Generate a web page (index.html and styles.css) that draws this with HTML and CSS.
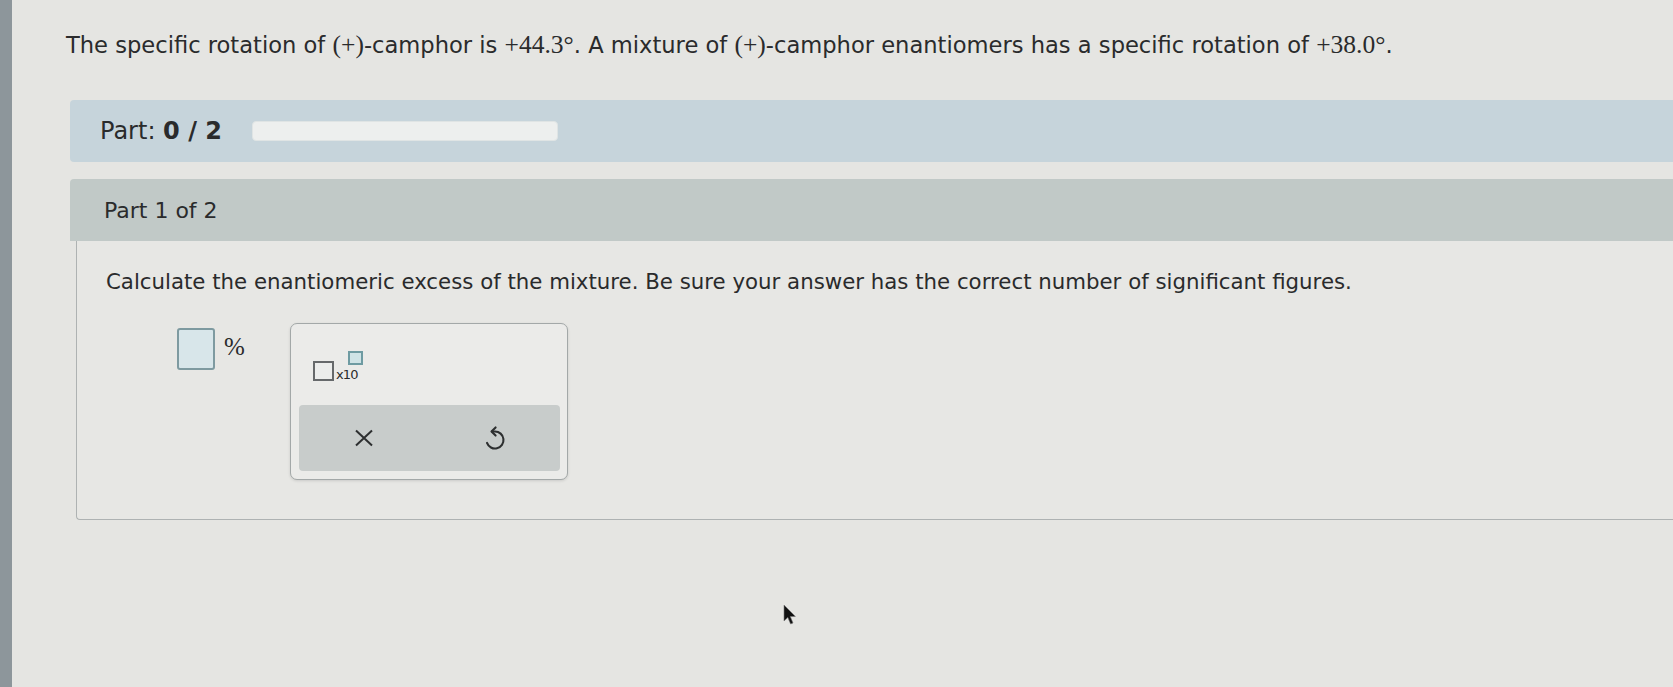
FILE: index.html
```html
<!DOCTYPE html>
<html>
<head>
<meta charset="utf-8">
<link rel="stylesheet" href="styles.css">
</head>
<body>
<div class="strip"></div>
<main class="main">
  <p class="title">The specific rotation of <span class="m">(+)</span>-camphor is <span class="m">+44.3°</span>. A mixture of <span class="m">(+)</span>-camphor enantiomers has a specific rotation of <span class="m">+38.0°</span>.</p>

  <div class="partbar">
    <span class="part-label">Part: <b>0 / 2</b></span>
    <div class="progress"></div>
  </div>

  <div class="part-header">Part 1 of 2</div>

  <section class="content">
    <p class="question">Calculate the enantiomeric excess of the mixture. Be sure your answer has the correct number of significant figures.</p>
    <div class="answer-row">
      <div class="answer">
        <span class="ans-box"></span>
        <span class="pct">%</span>
      </div>
      <div class="popup">
        <div class="sci">
          <span class="sci-box"></span>
          <span class="sci-x">x10</span>
          <span class="sci-exp"></span>
        </div>
        <div class="btnbar">
          <button class="btn" aria-label="clear">
            <svg width="22" height="22" viewBox="0 0 22 22"><path d="M3 3.5 L19 18.5 M19 3.5 L3 18.5" stroke="#2d2f30" stroke-width="2" fill="none"/></svg>
          </button>
          <button class="btn" aria-label="undo">
            <svg width="24" height="26" viewBox="0 0 24 26"><path d="M9 6.5 H12 A8.5 8.5 0 1 1 4 17.9" stroke="#2d2f30" stroke-width="2.1" fill="none" stroke-linecap="round"/><path d="M12.6 2.4 L8.5 6.5 L12.6 10.6" stroke="#2d2f30" stroke-width="2.1" fill="none" stroke-linecap="round" stroke-linejoin="round"/></svg>
          </button>
        </div>
      </div>
    </div>
  </section>
</main>
<svg class="cursor" width="14" height="22" viewBox="0 0 14 22"><path d="M1 1 L1 17 L4.8 13.4 L7.6 20 L10 19 L7.3 12.6 L12.4 12.4 Z" fill="#111" stroke="#777" stroke-width="0.6"/></svg>
</body>
</html>
```

FILE: styles.css
```css
html, body {
  margin: 0;
  height: 100%;
}
body {
  display: flex;
  background: #e5e5e2;
  font-family: "DejaVu Sans", Verdana, sans-serif;
  color: #2a2b2c;
  overflow: hidden;
}
.strip {
  width: 12px;
  flex: none;
  background: #8d969b;
}
.main {
  flex: 1;
  padding-left: 54px;
  padding-top: 0;
}
.title {
  margin: 0;
  padding-top: 30px;
  font-size: 22.6px;
  line-height: 30px;
}
.m {
  font-family: "Liberation Serif", "Times New Roman", serif;
  font-size: 1.13em;
}
.partbar {
  margin-top: 40px;
  margin-left: 4px;
  height: 62px;
  background: #c6d4db;
  border-radius: 4px 0 0 4px;
  display: flex;
  align-items: center;
  padding-left: 30px;
}
.part-label {
  font-size: 24px;
  width: 152px;
  flex: none;
}
.part-label b {
  font-weight: bold;
}
.progress {
  width: 304px;
  height: 18px;
  background: #edefee;
  border: 1px solid #dfe4e4;
  border-radius: 4px;
}
.part-header {
  margin-top: 17px;
  margin-left: 4px;
  height: 62px;
  background: #c1c9c7;
  border-radius: 4px 0 0 0;
  display: flex;
  align-items: center;
  padding-left: 34px;
  font-size: 22px;
}
.content {
  margin-left: 10px;
  height: 279px;
  border: 1px solid #aeb2b2;
  border-top: none;
  border-right: none;
  border-radius: 0 0 0 4px;
  background: #e7e7e4;
  padding-left: 29px;
  box-sizing: border-box;
}
.question {
  margin: 0;
  padding-top: 28px;
  font-size: 21.3px;
  line-height: 26px;
}
.answer-row {
  margin-top: 28px;
  margin-left: 71px;
  display: flex;
  align-items: flex-start;
}
.answer {
  display: flex;
  align-items: center;
  margin-top: 5px;
  width: 113px;
}
.ans-box {
  width: 34px;
  height: 38px;
  border: 2px solid #7e9aa0;
  border-radius: 3px;
  background: #d8e6ea;
}
.pct {
  margin-left: 9px;
  font-family: "Liberation Serif", "Times New Roman", serif;
  font-size: 25px;
  margin-top: -4px;
}
.popup {
  width: 278px;
  height: 157px;
  box-sizing: border-box;
  border: 1.5px solid #a3a8a8;
  border-radius: 7px;
  background: #ebebe9;
  box-shadow: 0 1px 3px rgba(0,0,0,0.12);
  padding: 27px 7px 8px 8px;
  display: flex;
  flex-direction: column;
  justify-content: space-between;
}
.sci {
  display: flex;
  align-items: flex-end;
  margin-left: 14px;
  height: 30px;
}
.sci-box {
  width: 17px;
  height: 16px;
  border: 2px solid #66696b;
  background: #ecedec;
}
.sci-x {
  font-size: 13px;
  line-height: 12px;
  margin-left: 2px;
  margin-bottom: 0;
  letter-spacing: -0.9px;
}
.sci-exp {
  width: 11px;
  height: 10px;
  border: 2px solid #6e9ba2;
  background: #cfe3e6;
  align-self: flex-start;
  margin-left: -10px;
}
.btnbar {
  height: 66px;
  background: #c8cccb;
  border-radius: 4px;
  display: flex;
  align-items: center;
  gap: 101px;
  padding-left: 50px;
}
.btn {
  border: none;
  background: transparent;
  padding: 0;
  width: 30px;
  height: 30px;
  display: flex;
  align-items: center;
  justify-content: center;
}
.cursor {
  position: absolute;
  left: 783px;
  top: 604px;
}
```
